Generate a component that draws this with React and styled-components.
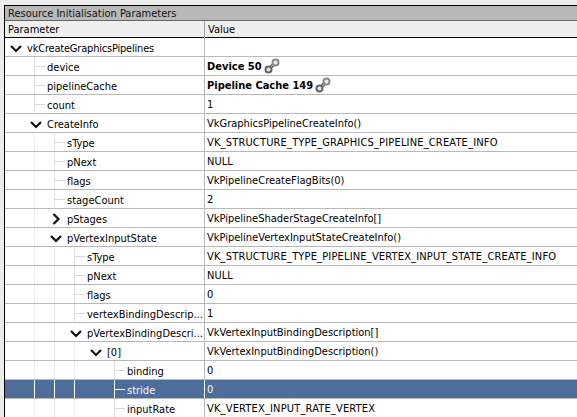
import React from "react";
import styled, { createGlobalStyle } from "styled-components";

const Global = createGlobalStyle`
  html, body { margin: 0; padding: 0; height: 100%; overflow: hidden; background: #f0f0f0; }
  #root { height: 100%; }
`;

const Window = styled.div`
  width: 577px;
  height: 417px;
  overflow: hidden;
  background: #ececec;
  padding: 5px 0 0 4px;
  box-sizing: border-box;
  font-family: "DejaVu Sans Condensed", "DejaVu Sans", sans-serif;
  font-stretch: condensed;
  font-size: 11px;
  color: #000;
`;

const Panel = styled.div`
  border-top: 1px solid #000;
  border-left: 1px solid #000;
  background: #fff;
`;

const TitleBar = styled.div`
  height: 14px;
  line-height: 15px;
  padding-left: 3px;
  background: #b9b9b9;
  border-bottom: 1px solid #666;
  color: #111;
`;

const Header = styled.div`
  display: grid;
  grid-template-columns: 199px 1fr;
  height: 16px;
  line-height: 18px;
  background: #efefef;
  border-bottom: 1px solid #000;
`;

const HeaderCell = styled.div`
  padding-left: 3px;
  & + & { border-left: 1px solid #a0a0a0; }
`;

const Row = styled.div`
  display: grid;
  grid-template-columns: 199px 1fr;
  height: 19px;
  box-sizing: border-box;
  border-bottom: 1px solid #b8b8b8;
  background: ${(p) => (p.$selected ? "#4f6d9b" : "#fff")};
  color: ${(p) => (p.$selected ? "#f4f6fa" : "#000")};
`;

const TreeCell = styled.div`
  display: flex;
  height: 18px;
  padding-left: 9px;
  overflow: hidden;
  white-space: nowrap;
`;

const Guide = styled.span`
  flex: none;
  width: 20px;
  box-sizing: border-box;
  height: 19px;
  border-left: 1px solid ${(p) => (p.$on ? (p.$selected ? "#fff" : "#eeeeee") : "transparent")};
`;

const Branch = styled.span`
  flex: none;
  width: 13px;
  height: 19px;
  box-sizing: border-box;
  display: flex;
  align-items: center;
  border-left: 1px solid ${(p) => (p.$leaf ? (p.$selected ? "#fff" : "#e4e4e4") : "transparent")};
`;

const Connector = styled.span`
  display: block;
  width: 10px;
  height: 1px;
  margin-top: -1px;
  background: ${(p) => (p.$selected ? "#fff" : "#d8d8d8")};
`;

const Twist = styled.svg`
  flex: none;
  width: 12px;
  height: 12px;
  margin: 1px 0 0 -5px;
  overflow: visible;
`;

const Label = styled.span`
  line-height: 22px;
  letter-spacing: ${(p) => (p.$root ? "-0.2px" : "0")};
`;

const ValueCell = styled.div`
  border-left: 1px solid #b8b8b8;
  padding: 1px 0 0 2px;
  box-sizing: border-box;
  height: 18px;
  line-height: 18px;
  white-space: nowrap;
  overflow: hidden;
  display: flex;
  align-items: flex-start;
  font-weight: ${(p) => (p.$bold ? 700 : 400)};
  letter-spacing: ${(p) => (p.$caps ? "0.17px" : "0")};
  ${(p) => (p.$selected ? "border-left-color:#fff;" : "")}
`;

const LinkIcon = styled.svg`
  flex: none;
  width: 16px;
  height: 16px;
  margin: 0 0 0 2px;
`;

const Chain = () => (
  <LinkIcon viewBox="0 0 16 16">
    <path d="M5 11L11 5" stroke="#666" strokeWidth="3.4" />
    <path d="M5 11L11 5" stroke="#ccc" strokeWidth="1" />
    <circle cx="4.5" cy="11.5" r="3" fill="#e6e6e6" stroke="#666" strokeWidth="2" />
    <circle cx="11.5" cy="4.5" r="3" fill="#eee" stroke="#8a8a8a" strokeWidth="2" />
  </LinkIcon>
);

const Chevron = ({ open }) => (
  <Twist viewBox="0 0 12 12">
    <path
      d={open ? "M1 4l5 5 5-5" : "M3.5 1l5 5-5 5"}
      fill="none"
      stroke="#111"
      strokeWidth="2.2"
    />
  </Twist>
);

const rows = [
  [0, "vkCreateGraphicsPipelines", "", "open"],
  [1, "device", "Device 50", "", true],
  [1, "pipelineCache", "Pipeline Cache 149", "", true],
  [1, "count", "1"],
  [1, "CreateInfo", "VkGraphicsPipelineCreateInfo()", "open"],
  [2, "sType", "VK_STRUCTURE_TYPE_GRAPHICS_PIPELINE_CREATE_INFO"],
  [2, "pNext", "NULL"],
  [2, "flags", "VkPipelineCreateFlagBits(0)"],
  [2, "stageCount", "2"],
  [2, "pStages", "VkPipelineShaderStageCreateInfo[]", "closed"],
  [2, "pVertexInputState", "VkPipelineVertexInputStateCreateInfo()", "open"],
  [3, "sType", "VK_STRUCTURE_TYPE_PIPELINE_VERTEX_INPUT_STATE_CREATE_INFO"],
  [3, "pNext", "NULL"],
  [3, "flags", "0"],
  [3, "vertexBindingDescrip...", "1"],
  [3, "pVertexBindingDescri...", "VkVertexInputBindingDescription[]", "open"],
  [4, "[0]", "VkVertexInputBindingDescription()", "open"],
  [5, "binding", "0"],
  [5, "stride", "0"],
  [5, "inputRate", "VK_VERTEX_INPUT_RATE_VERTEX"],
];

export default function App() {
  return (
    <Window>
      <Global />
      <Panel>
        <TitleBar>Resource Initialisation Parameters</TitleBar>
        <Header>
          <HeaderCell>Parameter</HeaderCell>
          <HeaderCell>Value</HeaderCell>
        </Header>
        {rows.map(([depth, name, value, twist, bold], idx) => {
          const selected = name === "stride";
          return (
            <Row key={idx} $selected={selected}>
              <TreeCell>
                {Array.from({ length: depth }, (_, i) => (
                  <Guide key={i} $selected={selected} $on={i > 0 && !(depth === 5 && i === 4)} />
                ))}
                <Branch $leaf={!twist} $selected={selected}>
                  {twist ? <Chevron open={twist === "open"} /> : <Connector $selected={selected} />}
                </Branch>
                <Label $root={depth === 0}>{name}</Label>
              </TreeCell>
              <ValueCell $bold={bold} $selected={selected} $caps={value.startsWith("VK_")}>
                {value}
                {bold && <Chain />}
              </ValueCell>
            </Row>
          );
        })}
      </Panel>
    </Window>
  );
}
